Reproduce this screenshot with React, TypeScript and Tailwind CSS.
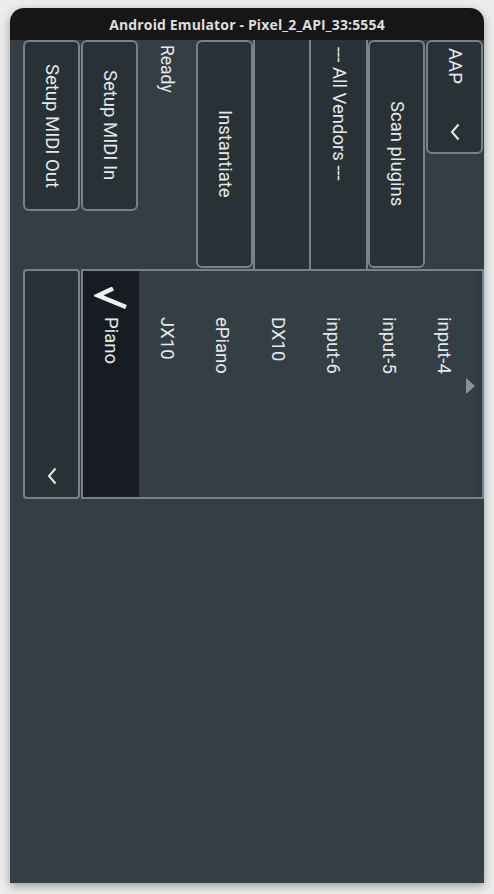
import React from "react";

const V = "[writing-mode:vertical-rl]";

const Chevron = ({ className = "" }: { className?: string }) => (
  <svg width="10" height="18" viewBox="0 0 10 18" className={className}>
    <path d="M8.5 1.5 L2 9 L8.5 16.5" fill="none" stroke="#e6e8e9" strokeWidth="2" />
  </svg>
);

const Check = () => (
  <svg width="34" height="22" viewBox="0 0 34 22">
    <path d="M19 1.5 L4 8.5 L32 20" fill="none" stroke="#eef0f1" strokeWidth="4.5" strokeLinejoin="miter" />
  </svg>
);

const items = ["Piano", "JX10", "ePiano", "DX10", "input-6", "input-5", "input-4"];

export default function App() {
  return (
    <div className="w-[494px] h-[894px] bg-[#ececec] pt-[8px] pl-[10px] font-['Roboto',sans-serif]">
      <div className="w-[474px] h-[875px] flex flex-col rounded-t-[14px] overflow-hidden shadow-[0_3px_10px_rgba(0,0,0,0.35)]">
        {/* title bar */}
        <div className="h-[32px] bg-[#161616] flex items-center justify-center">
          <span className="font-['Open_Sans',sans-serif] font-bold text-[14px] text-[#dedede] tracking-[0.15px]">
            Android Emulator - Pixel_2_API_33:5554
          </span>
        </div>

        {/* app content */}
        <div className="flex-1 bg-[#343e45] pl-[13px] text-[#e6e8e9] text-[18.5px] leading-none">
          {/* top row */}
          <div className="flex items-start h-[229px]">
            <div className="w-[57px] h-[171px] bg-[#283136] border-2 border-[#76828a] rounded-[6px] flex items-center justify-center">
              <span className={V}>Setup MIDI Out</span>
            </div>
            <div className="ml-px w-[57px] h-[171px] bg-[#283136] border-2 border-[#76828a] rounded-[6px] flex items-center justify-center">
              <span className={V}>Setup MIDI In</span>
            </div>
            <div className="w-[57px] h-full flex justify-center pt-[5px]">
              <span className={`${V} text-[17.5px]`}>Ready</span>
            </div>
            <div className="ml-px w-[57px] h-[228px] bg-[#283136] border-2 border-[#76828a] rounded-[6px] flex items-center justify-center">
              <span className={V}>Instantiate</span>
            </div>
            <div className="w-[58px] h-full bg-[#283136] border-x-2 border-[#76828a]" />
            <div className="w-[57px] h-full bg-[#283136] border-r-2 border-[#76828a] flex justify-center pt-[7px]">
              <span className={V}>--- All Vendors ---</span>
            </div>
            <div className="w-[57px] h-[228px] bg-[#283136] border-2 border-[#76828a] rounded-[6px] flex items-center justify-center">
              <span className={V}>Scan plugins</span>
            </div>
            <div className="ml-px w-[57px] h-[114px] bg-[#283136] border-2 border-[#76828a] rounded-[6px] flex flex-col items-center pt-[6px]">
              <span className={V}>AAP</span>
              <Chevron className="mt-[39px]" />
            </div>
          </div>

          {/* second row */}
          <div className="flex h-[230px]">
            <div className="w-[57px] h-full bg-[#283136] border-2 border-[#76828a] rounded-[4px] flex flex-col items-center justify-end pb-[12px]">
              <Chevron />
            </div>
            <div className="ml-px w-[403px] h-full border-2 border-[#76828a] bg-[#343e45] relative flex">
              {items.map((name, i) => (
                <div
                  key={name}
                  className={`w-[55.5px] h-full flex flex-col items-center pt-[16px] ${i === 0 ? "bg-[#161c21]" : ""}`}
                >
                  <div className="h-[22px] flex items-center">{i === 0 ? <Check /> : null}</div>
                  <span className={`${V} mt-[8px]`}>{name}</span>
                </div>
              ))}
              <div className="flex-1 bg-gradient-to-r from-[#343e45] to-[#2f383e]" />
              <svg width="9" height="16" viewBox="0 0 9 16" className="absolute left-[383px] top-[107px]">
                <path d="M0 0 L9 8 L0 16 Z" fill="#8a9399" />
              </svg>
            </div>
          </div>
        </div>
      </div>
    </div>
  );
}
